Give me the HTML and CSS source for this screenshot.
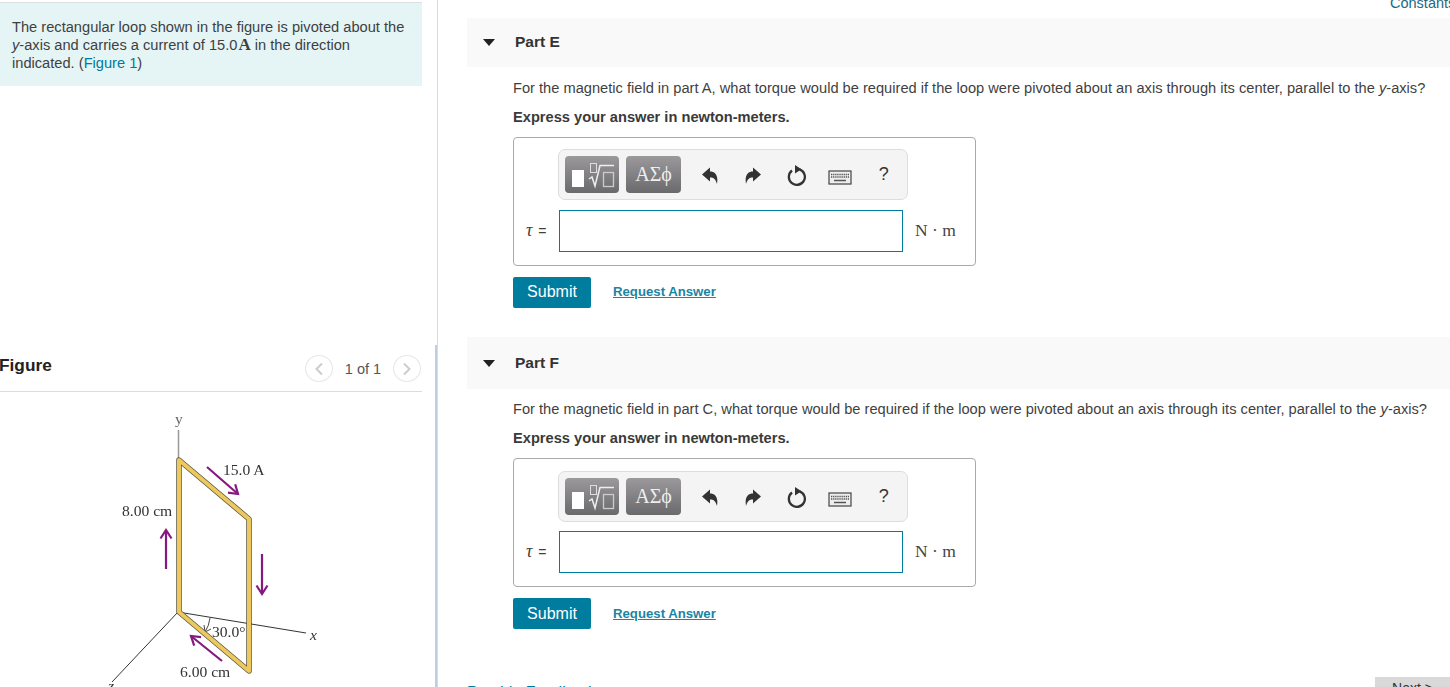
FILE: index.html
```html
<!DOCTYPE html>
<html lang="en">
<head>
<meta charset="utf-8">
<title>Rectangular loop</title>
<link rel="stylesheet" href="styles.css">
</head>
<body>
<div class="page">
  <aside class="left">
    <div class="intro">
      <p>The rectangular loop shown in the figure is pivoted about the <i>y</i>-axis and carries a current of 15.0<b class="unit">A</b> in the direction indicated. (<a href="#">Figure 1</a>)</p>
    </div>
    <section class="figure">
      <header class="fig-head">
        <h2>Figure</h2>
        <div class="pager">
          <span class="nav"><svg width="10" height="14" viewBox="0 0 10 14"><path d="M8 1.500 2.500 7 8 12.500" fill="none" stroke="#ccc" stroke-width="2"/></svg></span>
          <span class="count">1 of 1</span>
          <span class="nav"><svg width="10" height="14" viewBox="0 0 10 14"><path d="M2 1.500 7.500 7 2 12.500" fill="none" stroke="#ccc" stroke-width="2"/></svg></span>
        </div>
      </header>
      <svg class="diagram" width="422" height="295" viewBox="0 392 422 295">
        <defs>
          <marker id="ah" markerWidth="14" markerHeight="14" refX="10" refY="7" orient="auto" markerUnits="userSpaceOnUse">
            <path d="M1.500 1.500 10 7 1.500 12.500" fill="none" stroke="#84197f" stroke-width="2.200"/>
          </marker>
        </defs>
        <path d="M178.500 430V458" stroke="#999" stroke-width="1.500"/>
        <path d="M178 612 306 633M178 612 112 682" stroke="#333" stroke-width="1" fill="none"/>
        <path d="M210 618Q209 626 205 632M204 625 205 632 211 629" stroke="#333" stroke-width="0.900" fill="none"/>
        <polygon points="179,460 249,519 249,671 179,612" fill="none" stroke="#5c563c" stroke-width="5.500" stroke-linejoin="round"/>
        <polygon points="179,460 249,519 249,671 179,612" fill="none" stroke="#ecc85f" stroke-width="4" stroke-linejoin="round"/>
        <g stroke="#84197f" stroke-width="2.200" fill="none">
          <path d="M207 467 238 494" marker-end="url(#ah)"/>
          <path d="M166 569V530" marker-end="url(#ah)"/>
          <path d="M262 554V594" marker-end="url(#ah)"/>
          <path d="M222 661 191 636" marker-end="url(#ah)"/>
        </g>
        <g class="fig-text">
          <text x="223" y="475">15.0 A</text>
          <text x="122" y="516">8.00 cm</text>
          <text x="212" y="637">30.0°</text>
          <text x="180" y="677">6.00 cm</text>
          <text x="175" y="424" class="fig-axis">y</text>
          <text x="310" y="640" font-style="italic">x</text>
          <text x="108" y="691" font-style="italic">z</text>
        </g>
      </svg>
    </section>
  </aside>
  <main class="right">
    <a class="constants" href="#">Constants</a>

    <section class="part part-e">
      <header class="part-head"><span class="tri"></span><h3>Part E</h3></header>
      <div class="part-body">
        <p class="q">For the magnetic field in part A, what torque would be required if the loop were pivoted about an axis through its center, parallel to the <i>y</i>-axis?</p>
        <p class="hint">Express your answer in newton-meters.</p>
        <div class="answer">
          <div class="toolbar">
            <span class="tbtn"><svg width="54" height="36" viewBox="0 0 54 36"><rect x="7" y="13" width="12" height="17" fill="#fff"/><rect x="25.500" y="6.500" width="6" height="9" fill="none" stroke="#ddd"/><path d="M24 22 27 20 30 29 35 8.500H49" fill="none" stroke="#eee" stroke-width="1.500"/><rect x="38.500" y="15.500" width="10" height="14" fill="none" stroke="#ccc" stroke-width="1.300"/></svg></span>
            <span class="tbtn greek">ΑΣϕ</span>
            <span class="ico i-undo"><svg width="16" height="17" viewBox="0 0 16 17"><path d="M0 7.500 8 0.500V4.500C13 4.500 16.500 8 15 17 13.500 12 12 10.500 8 10.500V14.500Z" fill="#333"/></svg></span>
            <span class="ico i-redo"><svg width="16" height="17" viewBox="0 0 16 17"><path d="M16 7.500 8 0.500V4.500C3 4.500-.5 8 1 17 2.500 12 4 10.500 8 10.500V14.500Z" fill="#333"/></svg></span>
            <span class="ico i-reset"><svg width="20" height="21" viewBox="0 0 20 21"><path d="M12.500 4.300A8 8 0 1 1 5 5.500" fill="none" stroke="#333" stroke-width="2.300"/><path d="M8 0 14.500 4.300 8 8.500z" fill="#333"/></svg></span>
            <span class="ico i-keys"><svg width="24" height="15" viewBox="0 0 24 15"><rect x="1" y="1" width="22" height="13" fill="#eee" stroke="#444" stroke-width="1.200"/><path d="M3 4.500H21M3 7H21" stroke="#555" stroke-width="1.300" stroke-dasharray="1.300 .8"/><path d="M6 10.500H18" stroke="#555" stroke-width="1.500"/></svg></span>
            <span class="ico i-help">?</span>
          </div>
          <div class="row">
            <span class="var"><i class="tau">τ</i> =</span>
            <input class="field" type="text" aria-label="torque">
            <span class="units">N · m</span>
          </div>
        </div>
        <div class="actions"><button class="submit">Submit</button><a class="req" href="#">Request Answer</a></div>
      </div>
    </section>

    <section class="part part-f">
      <header class="part-head"><span class="tri"></span><h3>Part F</h3></header>
      <div class="part-body">
        <p class="q">For the magnetic field in part C, what torque would be required if the loop were pivoted about an axis through its center, parallel to the <i>y</i>-axis?</p>
        <p class="hint">Express your answer in newton-meters.</p>
        <div class="answer">
          <div class="toolbar">
            <span class="tbtn"><svg width="54" height="36" viewBox="0 0 54 36"><rect x="7" y="13" width="12" height="17" fill="#fff"/><rect x="25.500" y="6.500" width="6" height="9" fill="none" stroke="#ddd"/><path d="M24 22 27 20 30 29 35 8.500H49" fill="none" stroke="#eee" stroke-width="1.500"/><rect x="38.500" y="15.500" width="10" height="14" fill="none" stroke="#ccc" stroke-width="1.300"/></svg></span>
            <span class="tbtn greek">ΑΣϕ</span>
            <span class="ico i-undo"><svg width="16" height="17" viewBox="0 0 16 17"><path d="M0 7.500 8 0.500V4.500C13 4.500 16.500 8 15 17 13.500 12 12 10.500 8 10.500V14.500Z" fill="#333"/></svg></span>
            <span class="ico i-redo"><svg width="16" height="17" viewBox="0 0 16 17"><path d="M16 7.500 8 0.500V4.500C3 4.500-.5 8 1 17 2.500 12 4 10.500 8 10.500V14.500Z" fill="#333"/></svg></span>
            <span class="ico i-reset"><svg width="20" height="21" viewBox="0 0 20 21"><path d="M12.500 4.300A8 8 0 1 1 5 5.500" fill="none" stroke="#333" stroke-width="2.300"/><path d="M8 0 14.500 4.300 8 8.500z" fill="#333"/></svg></span>
            <span class="ico i-keys"><svg width="24" height="15" viewBox="0 0 24 15"><rect x="1" y="1" width="22" height="13" fill="#eee" stroke="#444" stroke-width="1.200"/><path d="M3 4.500H21M3 7H21" stroke="#555" stroke-width="1.300" stroke-dasharray="1.300 .8"/><path d="M6 10.500H18" stroke="#555" stroke-width="1.500"/></svg></span>
            <span class="ico i-help">?</span>
          </div>
          <div class="row">
            <span class="var"><i class="tau">τ</i> =</span>
            <input class="field" type="text" aria-label="torque">
            <span class="units">N · m</span>
          </div>
        </div>
        <div class="actions"><button class="submit">Submit</button><a class="req" href="#">Request Answer</a></div>
      </div>
    </section>

    <footer class="foot">
      <a class="feedback" href="#">Provide Feedback</a>
      <span class="next">Next &gt;</span>
    </footer>
  </main>
</div>
</body>
</html>
```

FILE: styles.css
```css
* { box-sizing: border-box; }
html, body { margin: 0; height: 687px; overflow: hidden; background: #fff; }
body { font-family: "Liberation Sans", Arial, sans-serif; font-size: 14.65px; color: #3f3f3f; }
a { color: #007a9c; text-decoration: none; }
p, h2, h3 { margin: 0; }

.page { display: flex; height: 687px; overflow: hidden; }

.left { width: 438px; flex: none; border-right: 1px solid #d4dbe4; padding-top: 2px; }
.intro { width: 422px; height: 84px; background: #e5f5f6; border-top: 1px solid #dbe1e3; padding: 15px 10px 0 12px; line-height: 18px; }
.unit { font-family: "Liberation Serif", serif; font-size: 17px; line-height: 0; margin-left: 1px; }

.figure { margin-top: 259px; width: 437px; height: 342px; border-right: 2px solid #bfcde0; }
.fig-head { width: 422px; height: 47px; display: flex; justify-content: space-between; align-items: center; border-bottom: 1px solid #dcdcdc; padding-bottom: 3px; }
.fig-head h2 { font-size: 17.3px; font-weight: 700; color: #222; margin: -3px 0 0 -1px; }
.pager { display: flex; align-items: center; width: 116px; justify-content: space-between; margin: 4px 1px 0 0; }
.nav { width: 28px; height: 27px; border: 1px solid #e6e6e6; border-radius: 50%; display: flex; align-items: center; justify-content: center; }
.count { color: #555; font-size: 14.5px; }
.diagram { display: block; filter: blur(0.4px); }
.fig-text { font-family: "Liberation Serif", serif; font-size: 15.6px; fill: #333; }
.fig-axis { fill: #666; }

.right { flex: 1; min-width: 0; padding-left: 29px; position: relative; overflow: hidden; }
.constants { display: block; margin: -6px 0 6px 923px; height: 18px; line-height: 18px; white-space: nowrap; color: #23687f; font-size: 14.5px; }

.part { width: 983px; }
.part-e { height: 319px; }
.part-f { height: 340px; }
.part-head { display: flex; align-items: center; background: #f9f9f9; padding-left: 16px; }
.part-e .part-head { height: 49px; padding-bottom: 1px; }
.part-f .part-head { height: 52px; }
.tri { width: 0; height: 0; border-left: 6.5px solid transparent; border-right: 6.5px solid transparent; border-top: 7px solid #222; margin-right: 20px; }
.part-head h3 { font-size: 15.5px; font-weight: 700; color: #333; }
.part-body { padding: 12px 0 0 46px; }
.part-f .part-body { padding-top: 11px; }
.q { line-height: 18px; white-space: nowrap; margin-bottom: 11px; }
.hint { font-weight: 700; line-height: 18px; margin-bottom: 11px; color: #3a3a3a; }

.answer { width: 463px; height: 129px; border: 1px solid #aaa; border-radius: 4px; padding: 11px 0 0 44px; }
.part-f .answer { padding-top: 12px; }
.toolbar { width: 350px; height: 51px; background: #f4f4f4; border: 1px solid #ddd; border-radius: 7px; display: flex; align-items: center; padding-left: 6px; position: relative; }
.tbtn { width: 54px; height: 37px; border-radius: 4px; background: linear-gradient(#9b999c, #6a696c); display: flex; align-items: center; justify-content: center; margin-right: 7px; }
.greek { width: 55px; font-family: "Liberation Serif", serif; font-size: 20px; color: #eee; }
.ico { width: 43.5px; display: flex; align-items: center; justify-content: center; color: #333; }
.i-undo { margin-top: 1px; }
.i-redo { margin-top: 1px; }
.i-reset { margin-top: 2px; }
.i-keys { margin-top: 6px; }
.i-help { font-size: 18px; }
.row { display: flex; align-items: center; margin: 10px 0 0 -32px; }
.part-f .row { margin-top: 9px; }
.var { width: 33px; font-size: 14px; padding-bottom: 2px; word-spacing: 2px; white-space: nowrap; }
.tau { font-family: "Liberation Serif", serif; font-size: 18px; }
.field { width: 344px; height: 42px; border: 1px solid #007c9e; background: #fff; padding: 0; }
.units { margin-left: 12px; padding-bottom: 2px; font-family: "Liberation Serif", serif; font-size: 17.5px; color: #444; }

.actions { display: flex; align-items: center; margin-top: 11px; }
.submit { width: 78px; height: 31px; border: 0; border-radius: 2px; background: #007c9e; color: #fff; font: 16px "Liberation Sans", Arial, sans-serif; padding: 0 0 2px; }
.part-f .submit { padding-bottom: 0; }
.req { margin: -2px 0 0 22px; font-size: 13.2px; font-weight: 700; text-decoration: underline; color: #1a84a4; }
.part-f .req { margin-top: 0; }

.foot { display: flex; justify-content: space-between; width: 983px; height: 20px; font-size: 16px; }
.feedback { margin-top: 7px; line-height: 18px; }
.next { width: 75px; height: 30px; background: #d9d9d9; text-align: center; color: #333; font-size: 14px; line-height: 20px; padding-top: 1px; }
```
